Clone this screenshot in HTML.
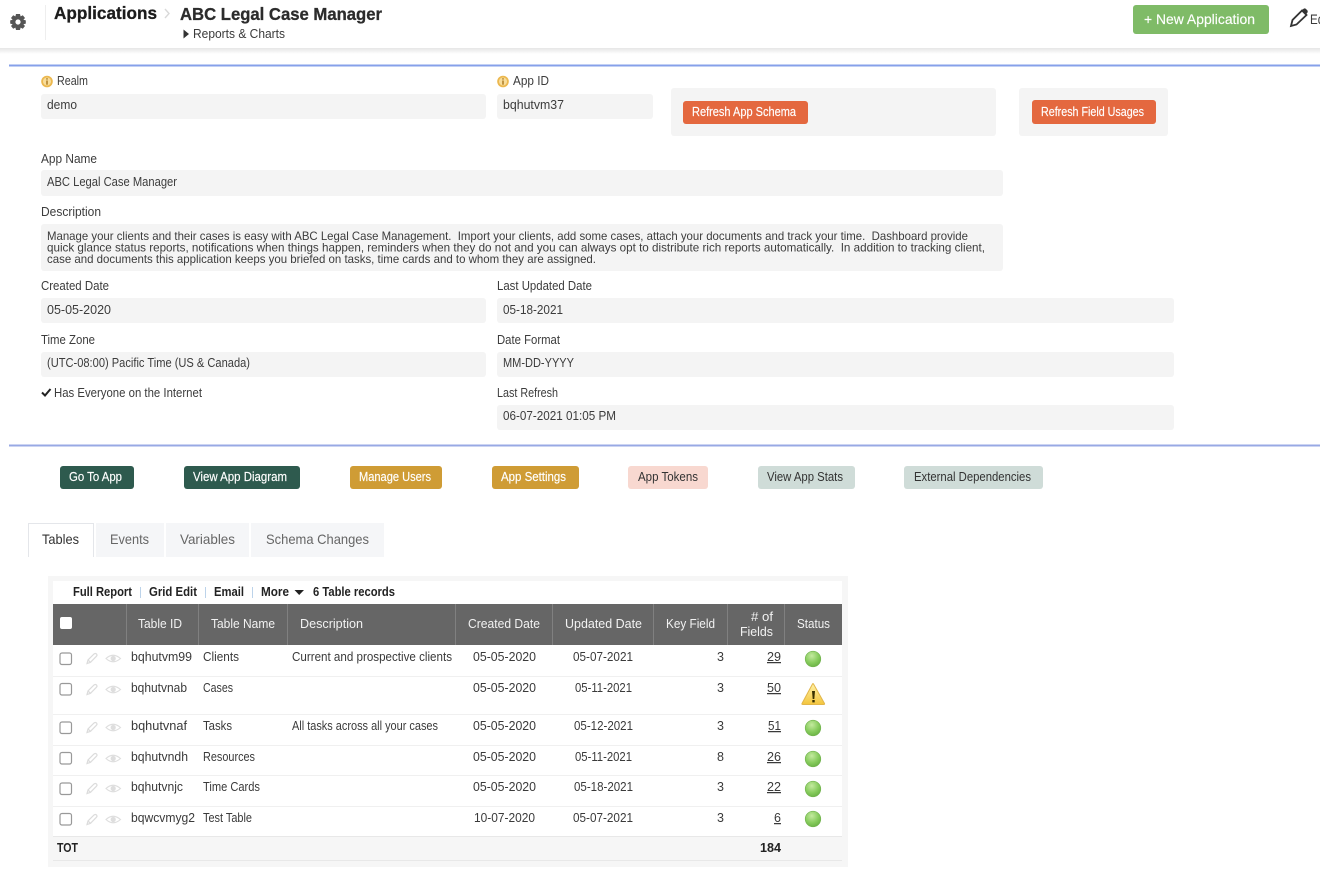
<!DOCTYPE html>
<html lang="en">
<head>
<meta charset="utf-8">
<title>ABC Legal Case Manager</title>
<style>
html,body{margin:0;padding:0;background:#fff;width:1320px;height:881px;overflow:hidden}
svg{display:block;filter:blur(.3px)}
text{font-family:"Liberation Sans",sans-serif;font-size:12.5px;fill:#3c3c3c;white-space:pre}
.w{fill:#fff;stroke:#fff;stroke-width:.15}
.b{font-weight:bold;fill:#222}
.th{fill:#f2f2f2;font-size:13px}
.tab{font-size:14px;fill:#666}
.c{fill:#3a3a3a}
.d{font-size:12px}
.u{text-decoration:underline}
.ck{fill:#fff;stroke:#999;stroke-width:1.2}
.h{font-size:17.5px;font-weight:bold;stroke-width:.3}
</style>
</head>
<body>
<svg width="1320" height="881" viewBox="0 0 1320 881" xmlns="http://www.w3.org/2000/svg">
<defs>
<linearGradient id="sh" x1="0" y1="0" x2="0" y2="1"><stop offset="0" stop-color="#e6e6e6"/><stop offset="1" stop-color="#fff"/></linearGradient>
<radialGradient id="gr" cx=".42" cy=".3" r=".75"><stop offset="0" stop-color="#c4ea9f"/><stop offset=".6" stop-color="#86cb5c"/><stop offset="1" stop-color="#68b043"/></radialGradient>
<linearGradient id="yl" x1="0" y1="0" x2="0" y2="1"><stop offset="0" stop-color="#fff2a8"/><stop offset="1" stop-color="#f3c53d"/></linearGradient>
<g id="acts">
<path d="M0 10.500 L1 7 L7 1 Q8.500 0 9.500 1 Q10.500 2.200 9.500 3.200 L3.500 9.300 Z M1 7 L3.500 9.300" fill="none" stroke="#dcdcdc" stroke-width="1.200"/>
<path d="M19 5.500 Q26 -1 33.500 5.500 Q26 12 19 5.500 Z" fill="none" stroke="#dedede" stroke-width="1.100"/>
<circle cx="26.200" cy="5.500" r="2.600" fill="#dedede"/>
</g>
<g id="ok"><circle cx="0" cy="0" r="7.800" fill="url(#gr)" stroke="#73b350" stroke-width=".6"/></g>
<g id="info"><circle cx="6" cy="6" r="5.800" fill="#ecb84f"/><circle cx="6" cy="6" r="4" fill="#f8dd9b"/><rect x="5.300" y="2.700" width="1.400" height="1.400" fill="#a8751b"/><rect x="5.300" y="5" width="1.400" height="4.200" fill="#a8751b"/></g>
</defs>

<!-- header -->
<rect x="0" y="0" width="1320" height="881" fill="#fff"/>
<rect x="0" y="48" width="1320" height="6" fill="url(#sh)"/>
<rect x="45" y="5" width="1" height="35" fill="#eeeeee"/>
<g transform="translate(18 22)" fill="#555">
<path d="M-2 -8 H2 L2.600 -5.600 L4.800 -6.700 L7 -4 L5.400 -2.200 L7.800 -1.600 V1.600 L5.400 2.200 L7 4 L4.800 6.700 L2.600 5.600 L2 8 H-2 L-2.600 5.600 L-4.800 6.700 L-7 4 L-5.400 2.200 L-7.800 1.600 V-1.600 L-5.400 -2.200 L-7 -4 L-4.800 -6.700 L-2.600 -5.600 Z M0 -2.600 A2.600 2.600 0 1 0 0.010 -2.600 Z" fill-rule="evenodd"/>
</g>
<text x="54" y="19" textLength="103" lengthAdjust="spacingAndGlyphs" class="h" style="fill:#1c1c1c;stroke:#1c1c1c">Applications</text>
<path d="M165 9 L169 13.500 L165 18" fill="none" stroke="#d9d9d9" stroke-width="1.400"/>
<text x="180" y="20" textLength="202" lengthAdjust="spacingAndGlyphs" class="h" style="fill:#2c2c2c;stroke:#2c2c2c">ABC Legal Case Manager</text>
<path d="M183.500 29.500 L189 34 L183.500 38.500 Z" fill="#333"/>
<text x="193" y="38" textLength="92" lengthAdjust="spacingAndGlyphs" class="c">Reports &amp; Charts</text>
<rect x="1133" y="5" width="136" height="29" rx="3" fill="#7fbb67"/>
<text x="1144" y="24" textLength="111" lengthAdjust="spacingAndGlyphs" class="w" style="font-size:14px">+ New Application</text>
<path d="M1291 26 L1292.500 20 L1302 10.500 L1306.500 15 L1296.500 24.500 Z" fill="none" stroke="#333" stroke-width="1.800"/>
<path d="M1302 10 L1304 8.500 Q1305 8 1306 9 L1307.500 10.500 Q1308 11.500 1307.500 12.500 L1306 14.500 Z" fill="#333"/>
<text x="1310" y="24" textLength="20" lengthAdjust="spacingAndGlyphs" style="font-size:14px">Edit</text>

<rect x="9" y="64.500" width="1311" height="2" fill="#86a0ea"/>
<rect x="9" y="444.500" width="1311" height="2" fill="#98a9e4"/>

<!-- form -->
<use href="#info" x="41" y="75.500"/>
<text x="57" y="85" textLength="31" lengthAdjust="spacingAndGlyphs">Realm</text>
<use href="#info" x="497" y="75.500"/>
<text x="513" y="85" textLength="36" lengthAdjust="spacingAndGlyphs">App ID</text>
<g fill="#f4f4f4">
<rect x="41" y="94" width="445" height="25" rx="3"/>
<rect x="497" y="94" width="156" height="25" rx="3"/>
<rect x="671" y="88" width="325" height="48" rx="3"/>
<rect x="1019" y="88" width="149" height="48" rx="3"/>
<rect x="41" y="170" width="962" height="26" rx="3"/>
<rect x="41" y="224" width="962" height="47" rx="3"/>
<rect x="41" y="298" width="445" height="25" rx="3"/>
<rect x="497" y="298" width="677" height="25" rx="3"/>
<rect x="41" y="352" width="445" height="25" rx="3"/>
<rect x="497" y="352" width="677" height="25" rx="3"/>
<rect x="497" y="405" width="677" height="25" rx="3"/>
</g>
<text x="47" y="109" textLength="30" lengthAdjust="spacingAndGlyphs">demo</text>
<text x="503" y="109" textLength="61" lengthAdjust="spacingAndGlyphs">bqhutvm37</text>
<rect x="683" y="101" width="125" height="23" rx="3" fill="#e4683f"/>
<text x="692" y="116" textLength="104" lengthAdjust="spacingAndGlyphs" class="w">Refresh App Schema</text>
<rect x="1032" y="100" width="124" height="24" rx="3" fill="#e4683f"/>
<text x="1041" y="116" textLength="103" lengthAdjust="spacingAndGlyphs" class="w">Refresh Field Usages</text>

<text x="41" y="163" textLength="56" lengthAdjust="spacingAndGlyphs">App Name</text>
<text x="47" y="186" textLength="130" lengthAdjust="spacingAndGlyphs">ABC Legal Case Manager</text>
<text x="41" y="216" textLength="60" lengthAdjust="spacingAndGlyphs">Description</text>
<text x="47" y="240" textLength="921" lengthAdjust="spacingAndGlyphs" class="d">Manage your clients and their cases is easy with ABC Legal Case Management.  Import your clients, add some cases, attach your documents and track your time.  Dashboard provide</text>
<text x="47" y="251.500" textLength="938" lengthAdjust="spacingAndGlyphs" class="d">quick glance status reports, notifications when things happen, reminders when they do not and you can always opt to distribute rich reports automatically.  In addition to tracking client,</text>
<text x="47" y="263" textLength="549" lengthAdjust="spacingAndGlyphs" class="d">case and documents this application keeps you briefed on tasks, time cards and to whom they are assigned.</text>

<text x="41" y="290" textLength="68" lengthAdjust="spacingAndGlyphs">Created Date</text>
<text x="497" y="290" textLength="95" lengthAdjust="spacingAndGlyphs">Last Updated Date</text>
<text x="47" y="314" textLength="64" lengthAdjust="spacingAndGlyphs">05-05-2020</text>
<text x="503" y="314" textLength="60" lengthAdjust="spacingAndGlyphs">05-18-2021</text>
<text x="41" y="344" textLength="54" lengthAdjust="spacingAndGlyphs">Time Zone</text>
<text x="497" y="344" textLength="63" lengthAdjust="spacingAndGlyphs">Date Format</text>
<text x="47" y="367" textLength="203" lengthAdjust="spacingAndGlyphs">(UTC-08:00) Pacific Time (US &amp; Canada)</text>
<text x="503" y="367" textLength="71" lengthAdjust="spacingAndGlyphs">MM-DD-YYYY</text>
<path d="M42 392.500 L45 395.500 L50.500 389" fill="none" stroke="#222" stroke-width="2"/>
<text x="54" y="397" textLength="148" lengthAdjust="spacingAndGlyphs">Has Everyone on the Internet</text>
<text x="497" y="397" textLength="61" lengthAdjust="spacingAndGlyphs">Last Refresh</text>
<text x="503" y="420" textLength="113" lengthAdjust="spacingAndGlyphs">06-07-2021 01:05 PM</text>

<!-- action buttons -->
<rect x="60" y="466" width="74" height="23" rx="3" fill="#2e5a4e"/>
<text x="69" y="481" textLength="53" lengthAdjust="spacingAndGlyphs" class="w">Go To App</text>
<rect x="184" y="466" width="116" height="23" rx="3" fill="#2e5a4e"/>
<text x="193" y="481" textLength="94" lengthAdjust="spacingAndGlyphs" class="w">View App Diagram</text>
<rect x="350" y="466" width="92" height="23" rx="3" fill="#cf9c35"/>
<text x="359" y="481" textLength="72" lengthAdjust="spacingAndGlyphs" class="w">Manage Users</text>
<rect x="492" y="466" width="87" height="23" rx="3" fill="#cf9c35"/>
<text x="501" y="481" textLength="65" lengthAdjust="spacingAndGlyphs" class="w">App Settings</text>
<rect x="628" y="466" width="80" height="23" rx="3" fill="#f8d8d0"/>
<text x="638" y="481" textLength="60" lengthAdjust="spacingAndGlyphs" style="fill:#333">App Tokens</text>
<rect x="758" y="466" width="97" height="23" rx="3" fill="#cfdcd8"/>
<text x="767" y="481" textLength="76" lengthAdjust="spacingAndGlyphs" style="fill:#333">View App Stats</text>
<rect x="904" y="466" width="139" height="23" rx="3" fill="#cfdcd8"/>
<text x="914" y="481" textLength="117" lengthAdjust="spacingAndGlyphs" style="fill:#333">External Dependencies</text>

<!-- tabs -->
<g fill="#f5f6f8">
<rect x="96" y="523" width="68" height="34"/>
<rect x="166" y="523" width="83" height="34"/>
<rect x="251" y="523" width="133" height="34"/>
</g>
<path d="M28.500 557 V523.500 H93.500 V557" fill="#fff" stroke="#e4e6ea"/>
<text x="42" y="544" textLength="37" lengthAdjust="spacingAndGlyphs" class="tab" style="fill:#333">Tables</text>
<text x="110" y="544" textLength="39" lengthAdjust="spacingAndGlyphs" class="tab">Events</text>
<text x="180" y="544" textLength="55" lengthAdjust="spacingAndGlyphs" class="tab">Variables</text>
<text x="266" y="544" textLength="103" lengthAdjust="spacingAndGlyphs" class="tab">Schema Changes</text>

<!-- table -->
<rect x="48" y="576" width="800" height="291" fill="#f6f6f6"/>
<rect x="53" y="581" width="789" height="255" fill="#fff"/>
<text x="73" y="596" textLength="59" lengthAdjust="spacingAndGlyphs" class="b">Full Report</text>
<rect x="140" y="587" width="1" height="11" fill="#bcd3ea"/>
<text x="149" y="596" textLength="48" lengthAdjust="spacingAndGlyphs" class="b">Grid Edit</text>
<rect x="205" y="587" width="1" height="11" fill="#bcd3ea"/>
<text x="214" y="596" textLength="30" lengthAdjust="spacingAndGlyphs" class="b">Email</text>
<rect x="252" y="587" width="1" height="11" fill="#bcd3ea"/>
<text x="261" y="596" textLength="28" lengthAdjust="spacingAndGlyphs" class="b">More</text>
<path d="M294.500 590 H304 L299.200 595 Z" fill="#222"/>
<text x="313" y="596" textLength="82" lengthAdjust="spacingAndGlyphs" class="b">6 Table records</text>

<rect x="53" y="604" width="789" height="41" fill="#666"/>
<g fill="#808080">
<rect x="126" y="604" width="1" height="41"/><rect x="198" y="604" width="1" height="41"/><rect x="287" y="604" width="1" height="41"/><rect x="455" y="604" width="1" height="41"/><rect x="552" y="604" width="1" height="41"/><rect x="653" y="604" width="1" height="41"/><rect x="727" y="604" width="1" height="41"/><rect x="784" y="604" width="1" height="41"/>
</g>
<rect x="60" y="617" width="12" height="12" rx="2" fill="#fff"/>
<text x="138" y="628" textLength="44" lengthAdjust="spacingAndGlyphs" class="th">Table ID</text>
<text x="211" y="628" textLength="64" lengthAdjust="spacingAndGlyphs" class="th">Table Name</text>
<text x="300" y="628" textLength="63" lengthAdjust="spacingAndGlyphs" class="th">Description</text>
<text x="468" y="628" textLength="72" lengthAdjust="spacingAndGlyphs" class="th">Created Date</text>
<text x="565" y="628" textLength="77" lengthAdjust="spacingAndGlyphs" class="th">Updated Date</text>
<text x="666" y="628" textLength="49" lengthAdjust="spacingAndGlyphs" class="th">Key Field</text>
<text x="751" y="621" textLength="22" lengthAdjust="spacingAndGlyphs" class="th"># of</text>
<text x="740" y="636" textLength="33" lengthAdjust="spacingAndGlyphs" class="th">Fields</text>
<text x="797" y="628" textLength="33" lengthAdjust="spacingAndGlyphs" class="th">Status</text>

<g fill="#f0f0f0">
<rect x="53" y="676" width="789" height="1"/><rect x="53" y="714" width="789" height="1"/><rect x="53" y="745" width="789" height="1"/><rect x="53" y="775" width="789" height="1"/><rect x="53" y="806" width="789" height="1"/>
</g>
<rect x="53" y="836" width="789" height="1" fill="#e8e8e8"/>
<rect x="53" y="860" width="789" height="1" fill="#e8e8e8"/>

<!-- row 1 -->
<rect x="60" y="653" width="11.500" height="11.500" rx="2" class="ck"/><use href="#acts" x="87" y="653"/>
<text x="131" y="661" textLength="61" lengthAdjust="spacingAndGlyphs" class="c">bqhutvm99</text>
<text x="203" y="661" textLength="36" lengthAdjust="spacingAndGlyphs" class="c">Clients</text>
<text x="292" y="661" textLength="160" lengthAdjust="spacingAndGlyphs" class="c">Current and prospective clients</text>
<text x="473" y="661" textLength="63" lengthAdjust="spacingAndGlyphs" class="c">05-05-2020</text>
<text x="573" y="661" textLength="60" lengthAdjust="spacingAndGlyphs" class="c">05-07-2021</text>
<text x="717" y="661" class="c">3</text>
<text x="767" y="661" textLength="14" lengthAdjust="spacingAndGlyphs" class="c u">29</text>
<use href="#ok" x="813" y="659"/>
<!-- row 2 -->
<rect x="60" y="683.500" width="11.500" height="11.500" rx="2" class="ck"/><use href="#acts" x="87" y="684"/>
<text x="131" y="692" textLength="56" lengthAdjust="spacingAndGlyphs" class="c">bqhutvnab</text>
<text x="203" y="692" textLength="30" lengthAdjust="spacingAndGlyphs" class="c">Cases</text>
<text x="473" y="692" textLength="63" lengthAdjust="spacingAndGlyphs" class="c">05-05-2020</text>
<text x="575" y="692" textLength="57" lengthAdjust="spacingAndGlyphs" class="c">05-11-2021</text>
<text x="717" y="692" class="c">3</text>
<text x="767" y="692" textLength="14" lengthAdjust="spacingAndGlyphs" class="c u">50</text>
<path d="M813.500 684 L824.500 703.500 Q825 704.500 823.500 704.500 H803 Q801.500 704.500 802 703.500 L812.500 684 Q813 683 813.500 684 Z" fill="url(#yl)" stroke="#e2b64a"/>
<path d="M812 691 H815 L814.300 699 H812.700 Z" fill="#3a3000"/><rect x="812.300" y="700" width="2.400" height="2.400" fill="#3a3000"/>
<!-- row 3 -->
<rect x="60" y="722" width="11.500" height="11.500" rx="2" class="ck"/><use href="#acts" x="87" y="722"/>
<text x="131" y="730" textLength="56" lengthAdjust="spacingAndGlyphs" class="c">bqhutvnaf</text>
<text x="203" y="730" textLength="29" lengthAdjust="spacingAndGlyphs" class="c">Tasks</text>
<text x="292" y="730" textLength="146" lengthAdjust="spacingAndGlyphs" class="c">All tasks across all your cases</text>
<text x="473" y="730" textLength="63" lengthAdjust="spacingAndGlyphs" class="c">05-05-2020</text>
<text x="574" y="730" textLength="59" lengthAdjust="spacingAndGlyphs" class="c">05-12-2021</text>
<text x="717" y="730" class="c">3</text>
<text x="768" y="730" textLength="13" lengthAdjust="spacingAndGlyphs" class="c u">51</text>
<use href="#ok" x="813" y="728"/>
<!-- row 4 -->
<rect x="60" y="752.500" width="11.500" height="11.500" rx="2" class="ck"/><use href="#acts" x="87" y="753"/>
<text x="131" y="761" textLength="57" lengthAdjust="spacingAndGlyphs" class="c">bqhutvndh</text>
<text x="203" y="761" textLength="52" lengthAdjust="spacingAndGlyphs" class="c">Resources</text>
<text x="473" y="761" textLength="63" lengthAdjust="spacingAndGlyphs" class="c">05-05-2020</text>
<text x="575" y="761" textLength="57" lengthAdjust="spacingAndGlyphs" class="c">05-11-2021</text>
<text x="717" y="761" class="c">8</text>
<text x="767" y="761" textLength="14" lengthAdjust="spacingAndGlyphs" class="c u">26</text>
<use href="#ok" x="813" y="759"/>
<!-- row 5 -->
<rect x="60" y="783" width="11.500" height="11.500" rx="2" class="ck"/><use href="#acts" x="87" y="783"/>
<text x="131" y="791" textLength="52" lengthAdjust="spacingAndGlyphs" class="c">bqhutvnjc</text>
<text x="203" y="791" textLength="57" lengthAdjust="spacingAndGlyphs" class="c">Time Cards</text>
<text x="473" y="791" textLength="63" lengthAdjust="spacingAndGlyphs" class="c">05-05-2020</text>
<text x="574" y="791" textLength="59" lengthAdjust="spacingAndGlyphs" class="c">05-18-2021</text>
<text x="717" y="791" class="c">3</text>
<text x="767" y="791" textLength="14" lengthAdjust="spacingAndGlyphs" class="c u">22</text>
<use href="#ok" x="813" y="789"/>
<!-- row 6 -->
<rect x="60" y="813.500" width="11.500" height="11.500" rx="2" class="ck"/><use href="#acts" x="87" y="814"/>
<text x="131" y="822" textLength="64" lengthAdjust="spacingAndGlyphs" class="c">bqwcvmyg2</text>
<text x="203" y="822" textLength="49" lengthAdjust="spacingAndGlyphs" class="c">Test Table</text>
<text x="474" y="822" textLength="61" lengthAdjust="spacingAndGlyphs" class="c">10-07-2020</text>
<text x="573" y="822" textLength="60" lengthAdjust="spacingAndGlyphs" class="c">05-07-2021</text>
<text x="717" y="822" class="c">3</text>
<text x="774" y="822" class="c u">6</text>
<use href="#ok" x="813" y="819"/>
<!-- total -->
<text x="57" y="852" textLength="21" lengthAdjust="spacingAndGlyphs" class="b">TOT</text>
<text x="760" y="852" textLength="21" lengthAdjust="spacingAndGlyphs" class="b">184</text>
</svg>
</body>
</html>
